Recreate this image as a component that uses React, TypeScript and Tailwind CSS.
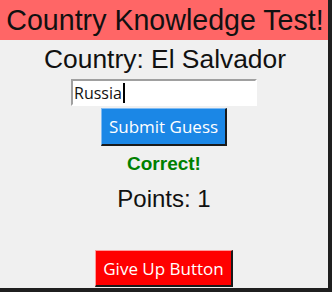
import React from "react";

const arial = { fontFamily: '"Liberation Sans", Arial, sans-serif' };
const ui = { fontFamily: '"Open Sans", "Noto Sans", sans-serif' };

export default function App() {
	return (
		<div className="w-[332px] h-[292px] bg-[#1f1f1f]">
			<div
				className="w-[328px] h-[288px] bg-[#f0f0f0] flex flex-col items-center overflow-hidden"
				style={arial}
			>
				{/* Title bar */}
				<div className="w-full h-[40px] shrink-0 bg-[#ff6666] flex items-center justify-center pl-[2px] text-[28.6px] text-[#111] whitespace-nowrap leading-none">
					Country Knowledge Test!
				</div>

				<div className="h-[39px] shrink-0 flex items-center pl-[2px] text-[26.4px] text-[#111] leading-none">
					Country: El Salvador
				</div>

				{/* Entry */}
				<div
					className="w-[186px] h-[27px] shrink-0 bg-white border-2 border-t-[#a0a0a0] border-l-[#a0a0a0] border-r-white border-b-white flex items-center pl-[1px] text-[16px] text-[#111] leading-none"
					style={ui}
				>
					<span>Russia</span>
					<span className="w-[2px] h-[20px] bg-black ml-[1px]" />
				</div>

				<button
					className="mt-[2px] h-[38px] shrink-0 px-[7px] bg-[#1b87e6] text-white text-[17px] leading-none border-l border-t border-l-[#7fbaf2] border-t-[#7fbaf2] border-r-2 border-b-2 border-r-[#1a1a1a] border-b-[#1a1a1a]"
					style={ui}
				>
					Submit Guess
				</button>

				<div className="h-[34px] shrink-0 flex items-center text-[19px] font-bold text-[#008000] leading-none">
					Correct!
				</div>

				<div className="h-[38px] shrink-0 flex items-center text-[24px] text-[#111] leading-none">
					Points: 1
				</div>

				<button
					className="mt-[32px] h-[37px] shrink-0 px-[7px] bg-[#ff0000] text-white text-[17px] leading-none border-l border-t border-l-[#ff9a9a] border-t-[#ff9a9a] border-r-2 border-b-2 border-r-[#1a1a1a] border-b-[#1a1a1a]"
					style={ui}
				>
					Give Up Button
				</button>
			</div>
		</div>
	);
}
